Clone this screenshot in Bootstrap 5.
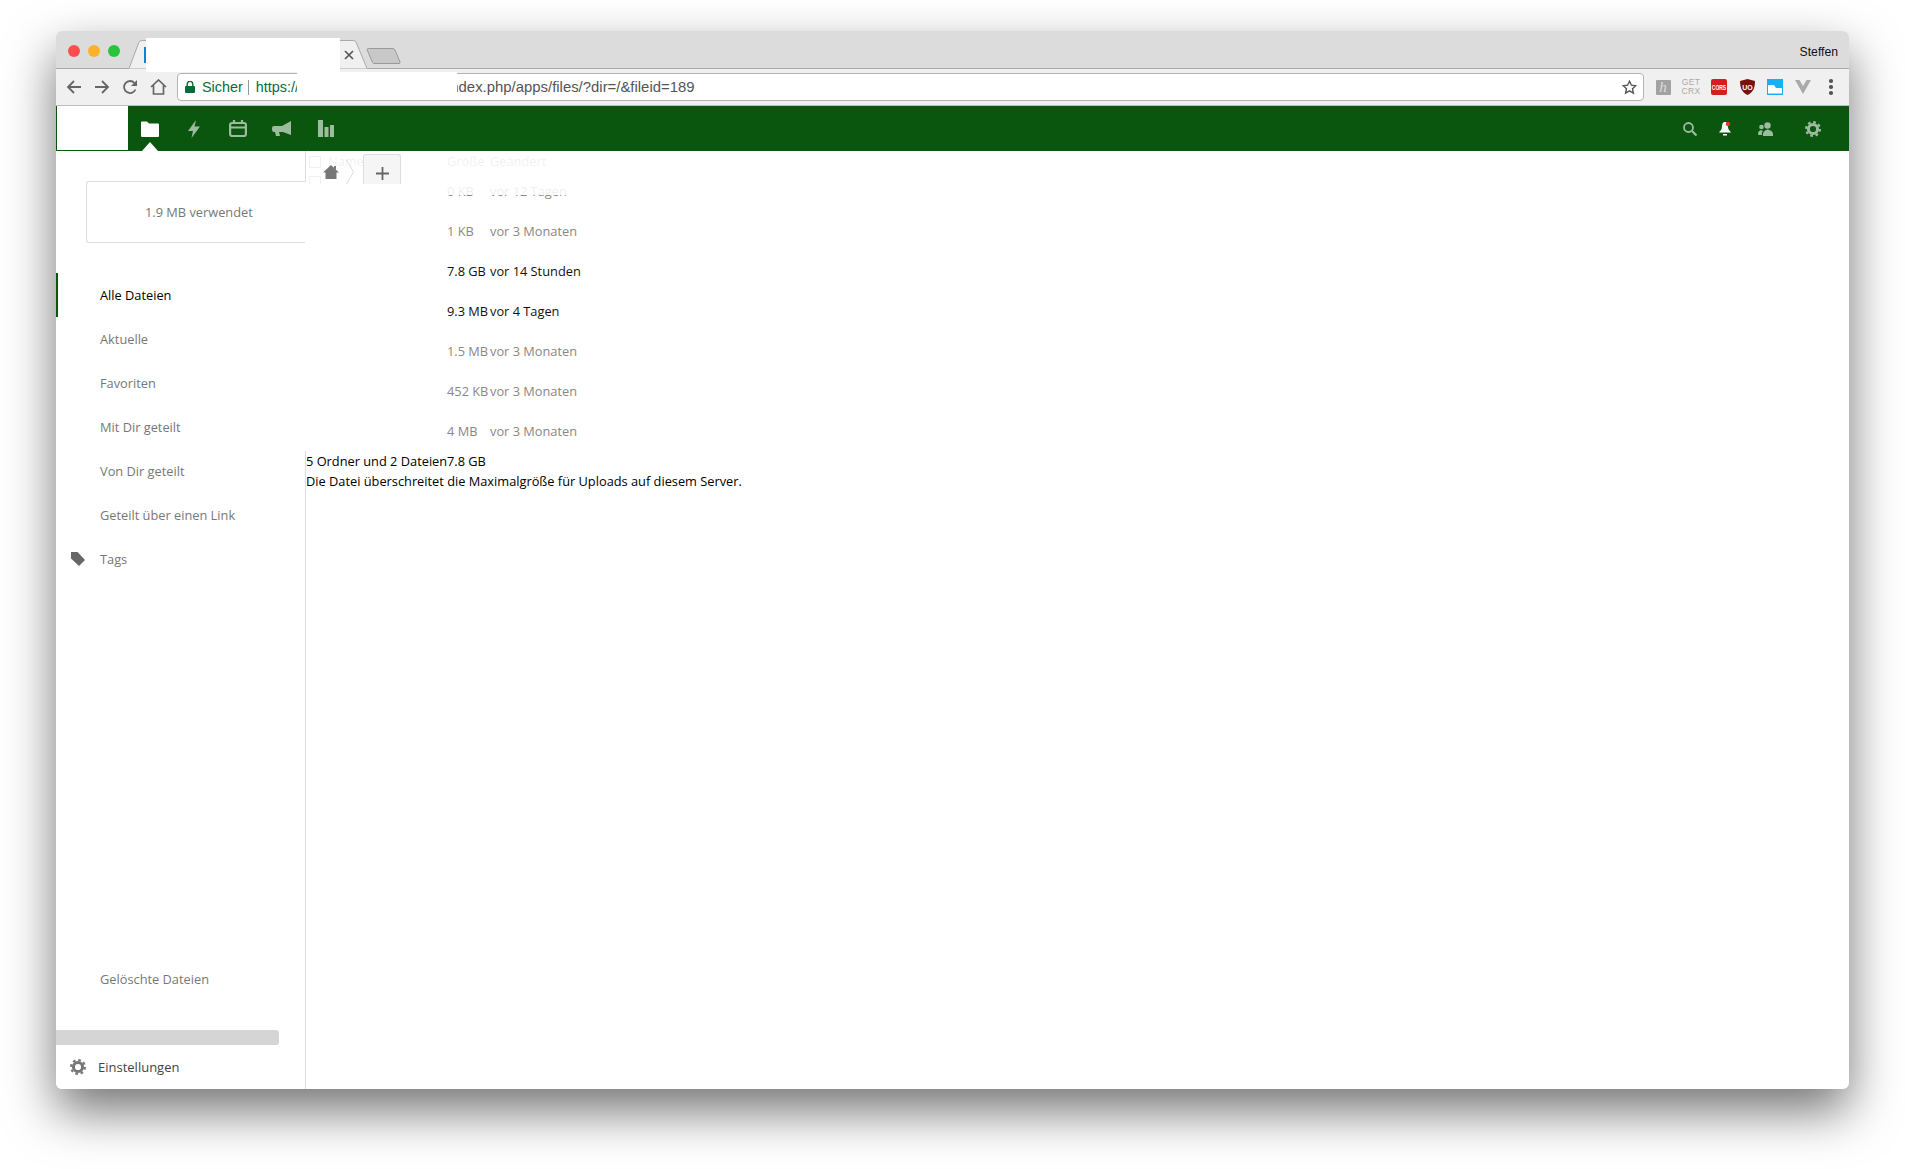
<!DOCTYPE html>
<html lang="de">
<head>
<meta charset="utf-8">
<title>Dateien</title>
<link rel="stylesheet" href="https://cdn.jsdelivr.net/npm/bootstrap@5.3.0/dist/css/bootstrap.min.css">
<style>
html,body{height:100%;}
body{background:#fff;overflow:hidden;padding:31px 56px 0;font-family:"Open Sans","Liberation Sans",sans-serif;font-size:12.8px;color:#000;}
.mac-window{width:1793px;height:1058px;border-radius:6px;overflow:hidden;background:#fff;box-shadow:0 22px 50px rgba(0,0,0,.55);position:relative;}
.title-bar{height:38px;background:#dcdcdc;border-bottom:1px solid #a9a9a9;padding-left:12px;position:relative;z-index:2;font-family:"Liberation Sans",sans-serif;}
.light{width:12px;height:12px;border-radius:50%;margin-right:8px;margin-top:14px;}
.light-r{background:#fc4e4e;}.light-y{background:#fdb02a;}.light-g{background:#27c43c;}
.tab-shape{position:relative;width:241px;height:29px;margin-top:9px;margin-bottom:-1px;}
.tab-shape svg{display:block;}
.tab-mask{position:absolute;left:18px;top:-2px;width:194px;height:34px;background:#fff;}
.tab-fav{position:absolute;left:16px;top:7px;width:2px;height:16px;background:#0a84d8;}
.tab-x{position:absolute;left:216px;top:10px;}
.new-tab{margin-left:-3px;margin-top:17px;}
.user-name{font-size:12.2px;color:#111;margin-right:11px;margin-top:14px;line-height:14px;}
.tool-bar{height:37px;background:#f0f0f0;border-bottom:1px solid #bdbdbd;padding:0 4px;font-family:"Liberation Sans",sans-serif;}
.tool-slot{width:28px;height:28px;flex:none;}
.addr-bar{position:relative;height:28px;margin-left:5px;margin-right:5px;background:#fff;border:1px solid #b4b4b4;border-radius:4px;padding:0 6px 0 7px;font-size:14.4px;}
.addr-text{padding-top:1px;}
.addr-safe{color:#0a6b3a;}
.addr-sicher{margin-left:7px;}
.addr-sep{width:1px;height:15px;background:#999;margin:0 7px 0 5px;}
.addr-tail{color:#555;margin-left:148px;font-size:14.9px;}
.addr-mask{position:absolute;left:119px;top:-2px;width:160px;height:27px;background:#fff;}
.ext-h{width:15px;height:15px;background:#a2a2a2;border-radius:1px;color:#ddd;font:italic 15px/15px "Liberation Serif",serif;text-align:center;}
.ext-crx{font-size:8.5px;line-height:9px;color:#aaa;text-align:center;letter-spacing:.3px;}
.ext-dots{width:3.5px;height:3.5px;border-radius:50%;background:#555;margin:1.2px 0;}
.green-bar{height:45px;background:#0a560e;}
.logo-box{width:71px;height:44px;margin-left:1px;background:#fff;flex:none;align-self:flex-start;}
.app-slot{width:44px;height:45px;position:relative;flex:none;}
.app-dim{opacity:.6;}
.app-active::after{content:"";position:absolute;left:14px;bottom:0;border-left:8px solid transparent;border-right:8px solid transparent;border-bottom:9px solid #fff;}
.right-icons{margin-right:28px;}
.gap-search{margin-right:21px;}.gap-bell{margin-right:26px;}.gap-people{margin-right:32px;}
.work-area{height:938px;}
.side-pane{width:250px;flex:none;border-right:1px solid #ddd;background:#fff;}
.quota-box{margin:30px 0 30px 30px;height:62px;border:1px solid #ddd;border-right:0;border-radius:3px 0 0 3px;padding:1px 0 0 58px;color:#777;}
.side-nav .nav-link,.side-foot{height:44px;padding:2px 0 0 44px;color:#777;font-size:12.8px;display:flex;align-items:center;position:relative;}
.side-nav .nav-link.is-on{color:#000;box-shadow:inset 2px 0 0 #0a560e;}
.side-icon{position:absolute;left:14px;top:14px;}
.side-trash{margin-bottom:29px;}
.side-scroll{width:223px;height:15px;background:#d5d5d5;border-radius:0 3px 3px 0;}
.side-foot{color:#444;padding-left:42px;font-size:13px;}
.file-pane{position:relative;min-width:0;}
.file-pane::before{content:"";position:absolute;left:-1px;top:31px;width:1px;height:269px;background:#fff;}
.file-table{table-layout:fixed;width:100%;margin:0;--bs-table-bg:transparent;}
.file-table td{padding:0;height:40px;font-size:12.8px;color:#888;white-space:nowrap;vertical-align:middle;border:0;line-height:18px;}
.file-table tr.row-head td{height:20px;color:#999;}
.file-table tr.row-on td{color:#111;}
.file-table tr.row-sum td{height:20px;color:#000;}
.file-table td.cut-cell{vertical-align:top;padding:5px 0 0 3px;}
.file-table td.chk-cell{padding-left:3px;}
.file-chk{display:inline-block;width:12px;height:12px;border:1px solid #999;margin-right:7px;vertical-align:-2px;}
.file-chk-cut{display:block;height:8px;border-bottom:0;}
.upload-note{line-height:20px;color:#000;}
.crumb-cover{position:absolute;left:0;right:0;top:0;height:44px;background:rgba(255,255,255,.86);}
.crumb-row{height:33px;padding-left:17px;}
.crumb-home{margin-top:9px;}
.crumb-chev{margin:0 10px 0 7px;align-self:flex-end;}
.crumb-add{width:38px;height:30px;align-self:flex-end;background:#f5f5f5;border:1px solid #ddd;border-bottom:0;border-radius:3px 3px 0 0;padding-top:7px;margin-left:-1px;}
</style>
</head>
<body>
<div class="mac-window d-flex flex-column">
  <div class="title-bar d-flex align-items-start">
    <div class="light light-r"></div><div class="light light-y"></div><div class="light light-g"></div>
    <div class="tab-shape">
      <svg width="241" height="29" viewBox="0 0 241 29"><path d="M0 28.5H1L11 2Q12 .5 14 .5H225Q227 .5 228 2L239 28.5H241" fill="#f0f0f0" stroke="#a9a9a9"/></svg>
      <div class="tab-fav"></div>
      <div class="tab-mask"></div>
      <svg class="tab-x" width="10" height="10" viewBox="0 0 10 10"><path d="M1 1L9 9M9 1L1 9" stroke="#555" stroke-width="1.7"/></svg>
    </div>
    <svg class="new-tab" width="35" height="17" viewBox="0 0 35 17"><path d="M1 1.5Q1 .5 2.5 .5H27Q28 .5 29 2L34 14Q34.5 15.5 33 15.5H8Q7 15.5 6.5 14.5Z" fill="#c8c8c8" stroke="#9a9a9a"/></svg>
    <div class="user-name ms-auto">Steffen</div>
  </div>

  <div class="tool-bar d-flex align-items-center">
    <div class="tool-slot d-flex align-items-center justify-content-center"><svg width="16" height="14" viewBox="0 0 16 14" fill="none" stroke="#666" stroke-width="1.8"><path d="M15 7H2M8 1L2 7l6 6"/></svg></div>
    <div class="tool-slot d-flex align-items-center justify-content-center"><svg width="16" height="14" viewBox="0 0 16 14" fill="none" stroke="#666" stroke-width="1.8"><path d="M1 7h13M8 1l6 6-6 6"/></svg></div>
    <div class="tool-slot d-flex align-items-center justify-content-center"><svg width="16" height="16" viewBox="0 0 16 16"><path d="M13.5 10.5A6 6 0 1 1 12.5 4" fill="none" stroke="#666" stroke-width="1.8"/><path d="M15 1v6H9z" fill="#666"/></svg></div>
    <div class="tool-slot d-flex align-items-center justify-content-center"><svg width="17" height="16" viewBox="0 0 17 16" fill="none" stroke="#666" stroke-width="1.7"><path d="M1 8l7.5-7L16 8M3.5 6.5V15h10V6.5"/></svg></div>
    <div class="addr-bar flex-grow-1 d-flex align-items-center">
      <svg width="10" height="12" viewBox="0 0 10 12"><path d="M2.2 5V3.2a2.8 2.8 0 0 1 5.6 0V5" fill="none" stroke="#0a6b3a" stroke-width="1.4"/><rect y="5" width="10" height="7" rx="1" fill="#0a6b3a"/></svg>
      <span class="addr-safe addr-sicher addr-text">Sicher</span><span class="addr-sep"></span><span class="addr-safe addr-text">https://</span><span class="addr-tail addr-text">index.php/apps/files/?dir=/&amp;fileid=189</span>
      <div class="addr-mask"></div>
      <svg class="ms-auto" width="15" height="15" viewBox="0 0 15 15"><path d="M7.5 1.2l1.9 4 4.4.5-3.3 3 .9 4.4-3.9-2.2-3.9 2.2.9-4.4-3.3-3 4.4-.5z" fill="none" stroke="#555" stroke-width="1.4"/></svg>
    </div>
    <div class="tool-slot d-flex align-items-center justify-content-center"><div class="ext-h">h</div></div>
    <div class="tool-slot d-flex align-items-center justify-content-center"><div class="ext-crx">GET<br>CRX</div></div>
    <div class="tool-slot d-flex align-items-center justify-content-center"><svg width="16" height="16" viewBox="0 0 16 16"><rect width="16" height="16" rx="2" fill="#d2211b"/><text transform="translate(8 11) scale(.62 1)" text-anchor="middle" font-family="Liberation Sans" font-weight="700" font-size="8" fill="#fff">CORS</text></svg></div>
    <div class="tool-slot d-flex align-items-center justify-content-center"><svg width="15" height="16" viewBox="0 0 15 16"><path d="M7.5 0L15 2c0 7-2 11.500-7.500 14C2 13.500 0 9 0 2z" fill="#7b1010"/><text x="7.500" y="10.500" text-anchor="middle" font-family="Liberation Sans" font-weight="700" font-size="7" fill="#fff">UO</text></svg></div>
    <div class="tool-slot d-flex align-items-center justify-content-center"><svg width="16" height="16" viewBox="0 0 16 16"><rect width="16" height="16" fill="#19aff5"/><path d="M1 6h6l2 3h6v5.500H1z" fill="#fff"/></svg></div>
    <div class="tool-slot d-flex align-items-center justify-content-center"><svg width="16" height="14" viewBox="0 0 16 14"><path d="M0 0h4.500L8 6 11.500 0H16L8 14z" fill="#aaa"/></svg></div>
    <div class="tool-slot d-flex flex-column align-items-center justify-content-center"><div class="ext-dots"></div><div class="ext-dots"></div><div class="ext-dots"></div></div>
  </div>

  <div class="green-bar d-flex align-items-center">
    <div class="logo-box"></div>
    <div class="app-slot app-active d-flex align-items-center justify-content-center"><svg width="18" height="16" viewBox="0 0 18 16" fill="#fff"><path d="M0 1.500A1 1 0 0 1 1 .5h5l2 2h9a1 1 0 0 1 1 1V15a1 1 0 0 1-1 1H1a1 1 0 0 1-1-1z"/></svg></div>
    <div class="app-slot d-flex align-items-center justify-content-center"><svg class="app-dim" width="12" height="18" viewBox="0 0 12 18" fill="#fff"><path d="M8 0L0 11h5L3.500 18 12 6.500H6.500z"/></svg></div>
    <div class="app-slot d-flex align-items-center justify-content-center"><svg class="app-dim" width="18" height="17" viewBox="0 0 18 17" fill="none" stroke="#fff" stroke-width="2.200"><rect x="1.100" y="3" width="15.800" height="13" rx="2"/><path d="M1 7.500h16M5 0v4M13 0v4"/></svg></div>
    <div class="app-slot d-flex align-items-center justify-content-center"><svg class="app-dim" width="20" height="15" viewBox="0 0 20 15" fill="#fff"><path d="M19 0v14l-8-3H7l1 4H4L3 11H2Q0 11 0 8.500V7q0-2 2-2h8z"/></svg></div>
    <div class="app-slot d-flex align-items-center justify-content-center"><svg class="app-dim" width="16" height="17" viewBox="0 0 16 17" fill="#fff"><path d="M0 0h5v17H0zM6.500 7h4v10h-4zM12 5h4v12h-4z"/></svg></div>
    <div class="right-icons ms-auto d-flex align-items-center">
      <svg class="app-dim gap-search" width="14" height="14" viewBox="0 0 14 14" fill="none" stroke="#fff"><circle cx="5.500" cy="5.500" r="4.500" stroke-width="1.800"/><path d="M9 9l4.500 4.500" stroke-width="2.200"/></svg>
      <svg class="gap-bell" width="14" height="15" viewBox="0 0 14 15"><path d="M7 1C4.500 1 4 3.500 4 6 4 8.500 2 10 1 11.500H13C12 10 10 8.500 10 6 10 3.500 9.500 1 7 1ZM5 13h4v1.500H5z" fill="#fff"/><circle cx="10" cy="3" r="2.200" fill="#e8341c"/></svg>
      <svg class="app-dim gap-people" width="15" height="14" viewBox="0 0 15 14" fill="#fff"><circle cx="9.500" cy="3.500" r="3.200"/><circle cx="3.500" cy="5" r="2.300"/><path d="M5 14q-1-5 4.500-6.500Q15 8.500 15 12v2zM0 12q0-3.500 3.500-3.800L5 9q-2 1.500-1 4H1q-1 0-1-1z"/></svg>
      <svg class="app-dim" width="16" height="16" viewBox="0 0 16 16" fill="none" stroke="#fff"><circle cx="8" cy="8" r="4.600" stroke-width="3"/><circle cx="8" cy="8" r="6.900" stroke-width="2.200" stroke-dasharray="2.700 2.720"/></svg>
    </div>
  </div>

  <div class="work-area d-flex">
    <aside class="side-pane d-flex flex-column">
      <div class="quota-box d-flex align-items-center">1.9 MB verwendet</div>
      <nav class="nav flex-column side-nav">
        <a class="nav-link is-on" href="#">Alle Dateien</a>
        <a class="nav-link" href="#">Aktuelle</a>
        <a class="nav-link" href="#">Favoriten</a>
        <a class="nav-link" href="#">Mit Dir geteilt</a>
        <a class="nav-link" href="#">Von Dir geteilt</a>
        <a class="nav-link" href="#">Geteilt über einen Link</a>
        <a class="nav-link" href="#"><svg class="side-icon" width="16" height="16" viewBox="0 0 16 16"><path d="M1 1h6.500L15 9l-6 6-8-7.500z" fill="#666"/></svg>Tags</a>
      </nav>
      <div class="mt-auto side-nav side-trash"><a class="nav-link" href="#">Gelöschte Dateien</a></div>
      <div class="side-scroll"></div>
      <div class="side-foot"><svg class="side-icon" width="16" height="16" viewBox="0 0 16 16" fill="none" stroke="#777"><circle cx="8" cy="8" r="4.600" stroke-width="3"/><circle cx="8" cy="8" r="6.900" stroke-width="2.200" stroke-dasharray="2.700 2.720"/></svg>Einstellungen</div>
    </aside>

    <main class="file-pane flex-grow-1">
      <table class="table table-borderless file-table">
        <colgroup><col style="width:141px"><col style="width:43px"><col></colgroup>
        <tbody>
          <tr class="row-head"><td class="chk-cell"><span class="file-chk"></span>Name</td><td>Größe</td><td>Geändert</td></tr>
          <tr><td class="cut-cell"><span class="file-chk file-chk-cut"></span></td><td>0 KB</td><td>vor 12 Tagen</td></tr>
          <tr><td></td><td>1 KB</td><td>vor 3 Monaten</td></tr>
          <tr class="row-on"><td></td><td>7.8 GB</td><td>vor 14 Stunden</td></tr>
          <tr class="row-on"><td></td><td>9.3 MB</td><td>vor 4 Tagen</td></tr>
          <tr><td></td><td>1.5 MB</td><td>vor 3 Monaten</td></tr>
          <tr><td></td><td>452 KB</td><td>vor 3 Monaten</td></tr>
          <tr><td></td><td>4 MB</td><td>vor 3 Monaten</td></tr>
          <tr class="row-sum"><td>5 Ordner und 2 Dateien</td><td>7.8 GB</td><td></td></tr>
        </tbody>
      </table>
      <div class="upload-note">Die Datei überschreitet die Maximalgröße für Uploads auf diesem Server.</div>
      <div class="crumb-cover">
        <div class="crumb-row d-flex align-items-center">
          <svg class="crumb-home" width="16" height="14" viewBox="0 0 16 14" fill="#777"><path d="M8 0l8 7.500h-2.500V14h-11V7.500H0z"/><path d="M11 1h2v4l-2-2z"/></svg>
          <svg class="crumb-chev" width="8" height="24" viewBox="0 0 8 24" fill="none" stroke="#ddd"><path d="M.5 0l7 12-7 12"/></svg>
          <div class="crumb-add d-flex align-items-center justify-content-center"><svg width="15" height="15" viewBox="0 0 15 15" stroke="#666" stroke-width="1.800"><path d="M7.500 1v13M1 7.500h13"/></svg></div>
        </div>
      </div>
    </main>
  </div>
</div>
<script src="https://cdn.jsdelivr.net/npm/bootstrap@5.3.0/dist/js/bootstrap.bundle.min.js"></script>
</body>
</html>
